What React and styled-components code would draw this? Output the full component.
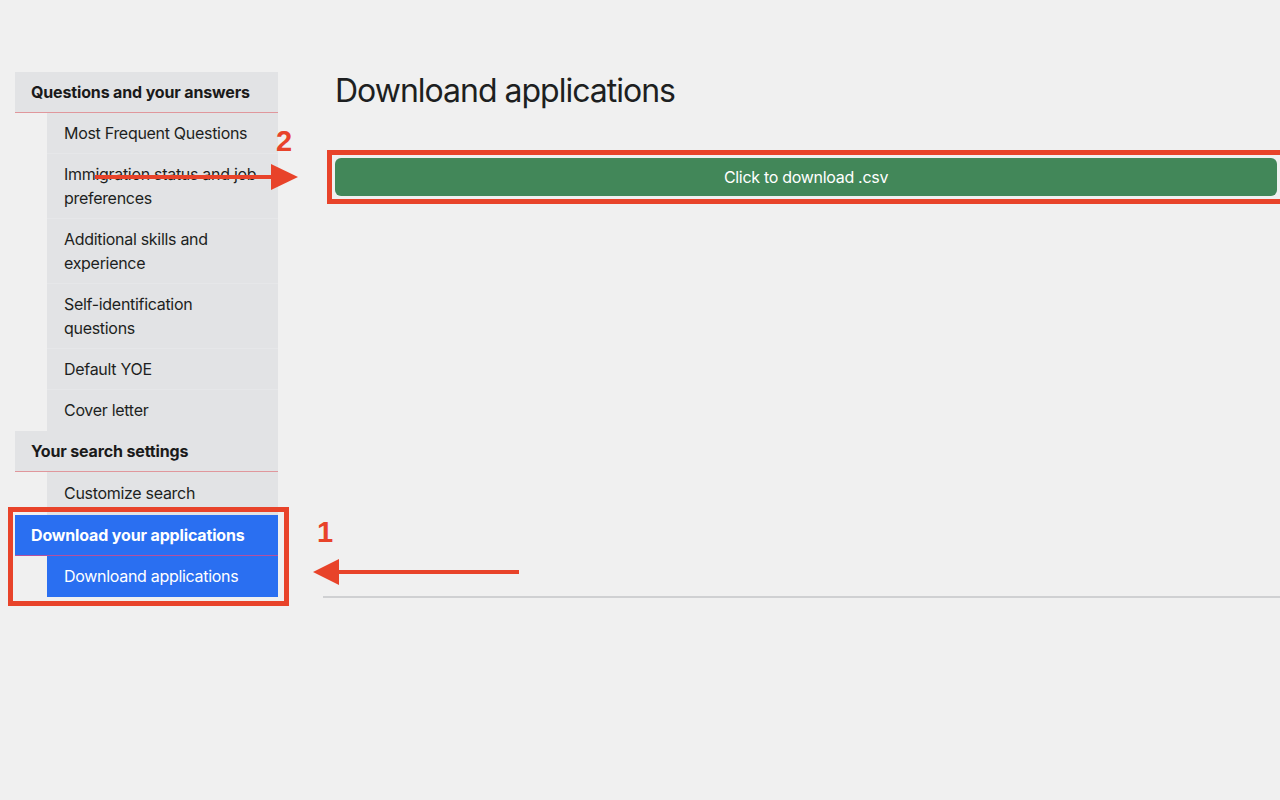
import React from "react";
import styled, { createGlobalStyle } from "styled-components";

const GlobalStyle = createGlobalStyle`
  html, body { margin: 0; padding: 0; background: #f0f0f0; }
  body { font-family: Inter, "Liberation Sans", Arial, sans-serif; color: #1d1f21; letter-spacing: -0.3px; }
  * { box-sizing: border-box; }
`;

const Page = styled.div`
  position: relative;
  width: 1280px;
  height: 800px;
  overflow: hidden;
  padding: 72px 0 0 15px;
  display: flex;
  align-items: flex-start;
`;

const Sidebar = styled.nav`
  width: 263px;
  flex: none;
  display: flex;
  flex-direction: column;
`;

const Group = styled.div`
  display: flex;
  flex-direction: column;
`;

const GroupHeader = styled.div`
  padding: 8px 16px;
  line-height: 24px;
  font-size: 16px;
  font-weight: 700;
  letter-spacing: -0.15px;
  background: ${(p) => (p.$active ? "#2a6ff1" : "#e2e3e5")};
  color: ${(p) => (p.$active ? "#ffffff" : "#1a1a1a")};
  border-bottom: 1px solid ${(p) => (p.$active ? "#b5509f" : "#e0979c")};
`;

const SubList = styled.ul`
  list-style: none;
  margin: 0 0 0 32px;
  padding: 0;
`;

const SubItem = styled.li`
  padding: ${(p) => (p.$tall ? "9px 14px 9px 17px" : "8px 14px 8px 17px")};
  line-height: 24px;
  font-size: 16px;
  background: ${(p) => (p.$active ? "#2a6ff1" : "#e2e3e5")};
  color: ${(p) => (p.$active ? "#ffffff" : "#1d1f21")};
  border-bottom: 1px solid ${(p) => (p.$active ? "#2a6ff1" : "#e6e7e9")};
  &:last-child { border-bottom-color: ${(p) => (p.$active ? "#2a6ff1" : "#e2e3e5")}; }
`;

const Main = styled.main`
  flex: 1;
  margin-left: 45px;
  display: flex;
  flex-direction: column;
`;

const Content = styled.div`
  padding: 0 3px 0 12px;
  display: flex;
  flex-direction: column;
`;

const Title = styled.h1`
  margin: 0;
  font-size: 32px;
  font-weight: 400;
  line-height: 38px;
  letter-spacing: -1px;
  color: #1d1f21;
`;

const DownloadButton = styled.button`
  margin-top: 48px;
  height: 38px;
  width: 100%;
  border: none;
  border-radius: 6px;
  background: #428759;
  color: #ffffff;
  font-family: inherit;
  font-size: 16px;
  letter-spacing: -0.3px;
  cursor: pointer;
`;

const Rule = styled.hr`
  margin: 400px 0 0;
  border: none;
  border-top: 2px solid #cfd0d2;
`;

const AnnotBox = styled.div`
  position: absolute;
  border: 5px solid #e8432a;
  pointer-events: none;
`;

const AnnotNumber = styled.div`
  position: absolute;
  color: #e8432a;
  font-family: "Liberation Sans", Arial, sans-serif;
  font-weight: 700;
  font-size: 29px;
  line-height: 1;
  letter-spacing: 0;
`;

const Arrow = styled.svg`
  position: absolute;
  overflow: visible;
  pointer-events: none;
`;

const questions = [
  "Most Frequent Questions",
  "Immigration status and job preferences",
  "Additional skills and experience",
  "Self-identification questions",
  "Default YOE",
  "Cover letter",
];

export default function App() {
  return (
    <>
      <GlobalStyle />
      <Page>
        <Sidebar>
          <Group>
            <GroupHeader>Questions and your answers</GroupHeader>
            <SubList>
              {questions.map((q) => (
                <SubItem key={q}>{q}</SubItem>
              ))}
            </SubList>
          </Group>
          <Group>
            <GroupHeader>Your search settings</GroupHeader>
            <SubList>
              <SubItem $tall>Customize search</SubItem>
            </SubList>
          </Group>
          <Group>
            <GroupHeader $active>Download your applications</GroupHeader>
            <SubList>
              <SubItem $active>Downloand applications</SubItem>
            </SubList>
          </Group>
        </Sidebar>
        <Main>
          <Content>
            <Title>Downloand applications</Title>
            <DownloadButton>Click to download .csv</DownloadButton>
          </Content>
          <Rule />
        </Main>

        <AnnotBox style={{ left: 327, top: 150, width: 970, height: 54 }} />
        <AnnotBox style={{ left: 8, top: 507, width: 281, height: 99 }} />
        <AnnotNumber style={{ left: 276, top: 127 }}>2</AnnotNumber>
        <AnnotNumber style={{ left: 317, top: 518 }}>1</AnnotNumber>
        <Arrow style={{ left: 0, top: 0 }} width="1" height="1">
          <line x1="95" y1="177" x2="274" y2="177" stroke="#e8432a" strokeWidth="4" />
          <polygon points="271,164 298,177 271,190" fill="#e8432a" />
          <line x1="336" y1="572" x2="519" y2="572" stroke="#e8432a" strokeWidth="4" />
          <polygon points="339,559 313,572 339,585" fill="#e8432a" />
        </Arrow>
      </Page>
    </>
  );
}
